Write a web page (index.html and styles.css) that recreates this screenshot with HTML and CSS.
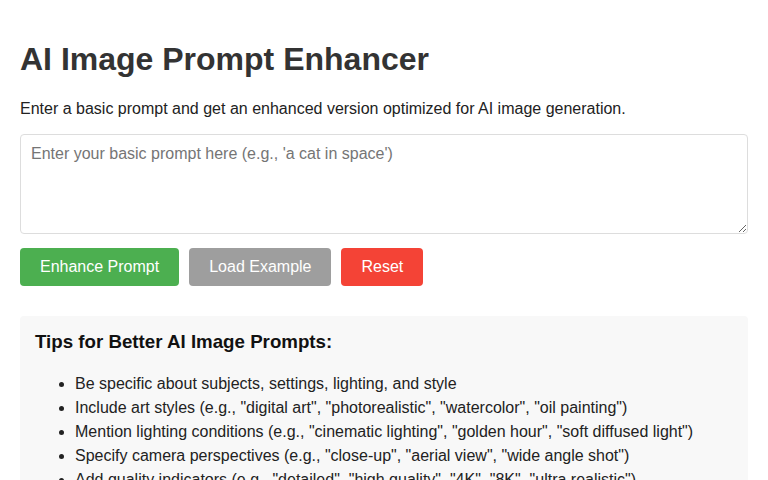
FILE: index.html
```html
<!DOCTYPE html>
<html lang="en">

<head>
    <meta charset="UTF-8">
    <meta name="viewport" content="width=device-width, initial-scale=1.0">
    <title>AI Image Prompt Enhancer</title>
    <link rel="stylesheet" href="styles.css">
</head>

<body>

    <div class="container">
        <h1>AI Image Prompt Enhancer</h1>
        <p>Enter a basic prompt and get an enhanced version optimized for AI image generation.</p>

        <textarea id="promptInput" placeholder="Enter your basic prompt here (e.g., 'a cat in space')"></textarea>

        <div class="buttons">
            <button class="btn-enhance">Enhance Prompt</button>
            <button class="btn-example">Load Example</button>
            <button class="btn-reset">Reset</button>
        </div>

        <div class="tips">
            <h3>Tips for Better AI Image Prompts:</h3>
            <ul>
                <li>Be specific about subjects, settings, lighting, and style</li>
                <li>Include art styles (e.g., "digital art", "photorealistic", "watercolor", "oil painting")</li>
                <li>Mention lighting conditions (e.g., "cinematic lighting", "golden hour", "soft diffused light")</li>
                <li>Specify camera perspectives (e.g., "close-up", "aerial view", "wide angle shot")</li>
                <li>Add quality indicators (e.g., "detailed", "high quality", "4K", "8K", "ultra realistic")</li>
            </ul>
        </div>
    </div>

</body>

</html>
```

FILE: styles.css
```css
/* General Styles */
body {
    font-family: 'Liberation Sans', Arial, sans-serif;
    margin: 0;
    padding: 20px;
    color: #222;
    background-color: #ffffff;
}

.container {
    max-width: 800px;
}

h1 {
    color: #333;
    font-size: 32px;
    margin: 21px 0 22px;
}

p {
    font-size: 16px;
    margin: 16px 0;
}

textarea {
    display: block;
    width: 100%;
    height: 100px;
    box-sizing: border-box;
    padding: 10px;
    border: 1px solid #ddd;
    border-radius: 4px;
    font-family: 'Liberation Sans', Arial, sans-serif;
    font-size: 16px;
    margin: 0 0 14px;
}

textarea::placeholder {
    color: #757575;
}

.buttons {
    display: flex;
    gap: 10px;
    margin-bottom: 30px;
}

button {
    border: none;
    border-radius: 4px;
    padding: 10px 20px;
    font-family: 'Liberation Sans', Arial, sans-serif;
    font-size: 16px;
    color: #ffffff;
    cursor: pointer;
}

.btn-enhance {
    background-color: #4CAF50;
}

.btn-example {
    background-color: #9e9e9e;
}

.btn-reset {
    background-color: #f44336;
}

.tips {
    background-color: #f8f8f8;
    border-radius: 4px;
    padding: 15px;
}

.tips h3 {
    color: #111;
    font-size: 18.72px;
    margin: 0 0 18.72px;
}

.tips ul {
    margin: 0;
    padding-left: 40px;
}

.tips li {
    line-height: 24px;
}
```
